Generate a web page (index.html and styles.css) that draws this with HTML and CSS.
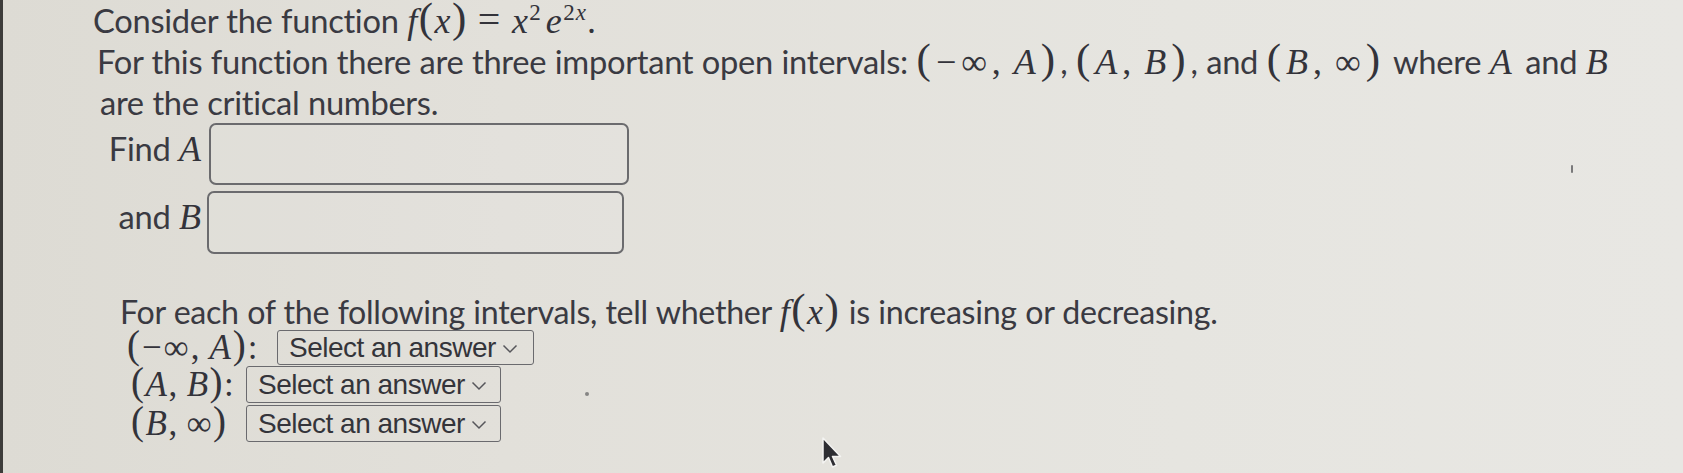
FILE: index.html
```html
<!DOCTYPE html>
<html>
<head>
<meta charset="utf-8">
<link rel="stylesheet" href="styles.css">
</head>
<body>
<div class="screen">
  <div class="page">
    <div class="intro">
      <div class="line l1">Consider the function <span class="m m1"><i>f</i><span class="p">(</span><i>x</i><span class="p">)</span><span class="rel">=</span><i>x</i><sup>2</sup><i class="e">e</i><sup>2<i>x</i></sup>.</span></div>
      <div class="line l2">For this function there are three important open intervals: <span class="m"><span class="p">(</span>−∞,<span class="th"></span><i>A</i><span class="p">)</span></span>, <span class="m"><span class="p">(</span><i>A</i>,<span class="th"></span><i>B</i><span class="p">)</span></span>, and <span class="m"><span class="p">(</span><i>B</i>,<span class="th"></span>∞<span class="p">)</span></span> where <span class="m"><i>A</i></span> and <span class="m"><i>B</i></span></div>
      <div class="line l3">are the critical numbers.</div>
    </div>

    <div class="answers">
      <label class="lab">Find <span class="m ml"><i>A</i></span></label>
      <div class="box box1"></div>
      <label class="lab">and <span class="m ml"><i>B</i></span></label>
      <div class="box box2"></div>
    </div>

    <div class="question">For each of the following intervals, tell whether <span class="m m1"><i>f</i><span class="p">(</span><i>x</i><span class="p">)</span></span> is increasing or decreasing.</div>

    <div class="rows">
      <div class="row r1">
        <span class="m iv"><span class="p">(</span>−∞,<span class="th"></span><i>A</i><span class="p">)</span>:</span>
        <span class="sel">Select an answer <svg class="chev" width="16" height="10" viewBox="0 0 16 10"><path d="M1.5 1.5 L8 8 L14.5 1.5" fill="none" stroke="#56565b" stroke-width="1.5"/></svg></span>
      </div>
      <div class="row r2">
        <span class="m iv"><span class="p">(</span><i>A</i>,<span class="th"></span><i>B</i><span class="p">)</span>:</span>
        <span class="sel">Select an answer <svg class="chev" width="16" height="10" viewBox="0 0 16 10"><path d="M1.5 1.5 L8 8 L14.5 1.5" fill="none" stroke="#56565b" stroke-width="1.5"/></svg></span>
      </div>
      <div class="row r3">
        <span class="m iv"><span class="p">(</span><i>B</i>,<span class="th"></span>∞<span class="p">)</span></span>
        <span class="sel">Select an answer <svg class="chev" width="16" height="10" viewBox="0 0 16 10"><path d="M1.5 1.5 L8 8 L14.5 1.5" fill="none" stroke="#56565b" stroke-width="1.5"/></svg></span>
      </div>
    </div>
  </div>

  <span class="speck speck1"></span>
  <span class="speck speck2"></span>
  <svg class="cursor" width="22" height="32" viewBox="0 0 22 32">
    <path d="M2 1 L2 26 L7.5 20.5 L11.5 30 L15.5 28.3 L11.5 19.5 L19.5 19.5 Z" fill="#2e2e33" stroke="#f4f4f2" stroke-width="1.5" stroke-linejoin="round"/>
  </svg>
</div>
</body>
</html>
```

FILE: styles.css
```css
html, body {
  margin: 0;
  padding: 0;
}

body {
  width: 1683px;
  height: 473px;
  overflow: hidden;
  background: linear-gradient(90deg, #dddbd4 0%, #e2e0da 30%, #e6e5e0 70%, #e8e7e3 100%);
  font-family: Lato, "Noto Sans", sans-serif;
  color: #3a3a42;
}

.screen {
  position: relative;
  width: 1683px;
  height: 473px;
  border-left: 3px solid #3d3c3a;
  box-sizing: border-box;
}

.page {
  padding-left: 90px;
  font-size: 32.7px;
  letter-spacing: -0.3px;
  word-spacing: 0.5px;
}

.intro {
  padding-top: 2px;
}

.intro .line {
  height: 41px;
  line-height: 41px;
  white-space: nowrap;
}

.intro .l1 { margin-top: -2px; }
.intro .l2 { padding-left: 4px; }
.intro .l3 { padding-left: 7px; }

.m {
  font-family: "Liberation Serif", "DejaVu Serif", serif;
  font-size: 36px;
  line-height: 20px;
  letter-spacing: 5px;
  word-spacing: 0;
  color: #33333a;
}

.m .p {
  font-size: 43px;
  font-style: normal;
  position: relative;
  top: -1px;
}

.m1 { letter-spacing: 1.5px; }
.ml { letter-spacing: 0; }

.m i {
  font-style: italic;
}

.m .rel {
  padding: 0 10px 0 10px;
  font-size: 40px;
}

.m .th {
  display: inline-block;
  width: 8px;
}

.m sup {
  font-size: 23px;
  letter-spacing: 1px;
  vertical-align: 0;
  position: relative;
  top: -13px;
  line-height: 0;
}

.m .e { margin-left: 4px; }

.answers {
  display: grid;
  grid-template-columns: 108px 420px;
  column-gap: 8px;
  row-gap: 6px;
  align-items: start;
  margin-top: 0;
}

.lab {
  text-align: right;
  white-space: nowrap;
  line-height: 41px;
  height: 41px;
  padding-top: 5px;
}

.box {
  box-sizing: border-box;
  height: 62px;
  border: 2px solid #6b6b6e;
  border-radius: 7px;
  background: rgba(255, 255, 255, 0.06);
}

.box2 {
  width: 417px;
  height: 63px;
  margin-left: -2px;
}

.question {
  margin-top: 37px;
  padding-left: 27px;
  height: 41px;
  line-height: 41px;
  font-size: 32.2px;
  white-space: nowrap;
}

.rows {
  padding-left: 34px;
  margin-top: -3px;
}

.row {
  display: flex;
  align-items: center;
  height: 37px;
}

.r3 { margin-top: 2px; }

.iv {
  display: inline-block;
  white-space: nowrap;
  font-size: 35px;
  letter-spacing: 2px;
}

.iv .p { font-size: 39px; }

.r1 .iv { width: 150px; }
.r2 .iv, .r3 .iv { width: 115px; padding-left: 4px; letter-spacing: 1.5px; }

.sel {
  display: inline-flex;
  align-items: center;
  box-sizing: border-box;
  height: 35px;
  padding: 0 7px 0 11px;
  border: 1.5px solid #6a6a6e;
  border-radius: 3px;
  font-family: "Liberation Sans", Arial, sans-serif;
  font-size: 28px;
  letter-spacing: -0.5px;
  word-spacing: 0;
  color: #34343a;
  white-space: nowrap;
}

.r1 .sel { width: 257px; }
.r2 .sel, .r3 .sel { width: 255px; height: 37px; }

.chev {
  margin-left: 6px;
  margin-top: 2px;
}

.speck {
  position: absolute;
  background: #5e5e60;
  border-radius: 2px;
}

.speck1 {
  left: 582px;
  top: 392px;
  width: 4px;
  height: 4px;
  opacity: 0.7;
}

.speck2 {
  left: 1568px;
  top: 165px;
  width: 2px;
  height: 8px;
  opacity: 0.8;
}

.cursor {
  position: absolute;
  left: 818px;
  top: 437px;
}
```
